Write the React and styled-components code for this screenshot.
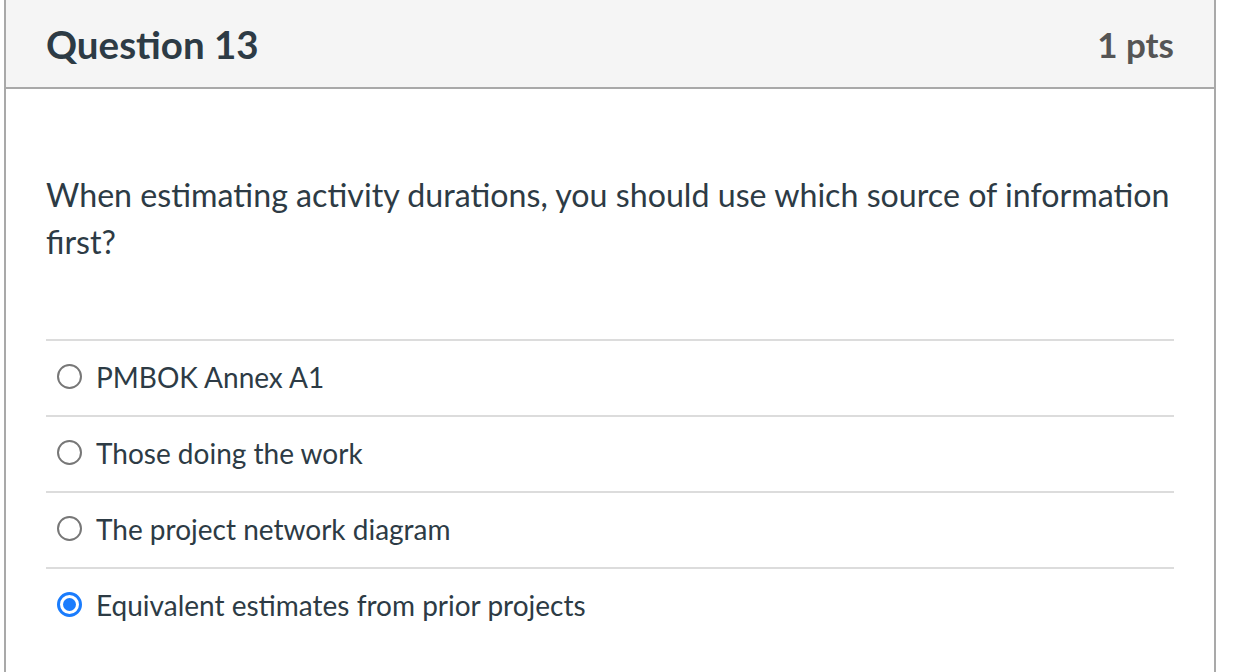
import React from 'react'
import styled, { createGlobalStyle } from 'styled-components'

const GlobalStyle = createGlobalStyle`
    html, body {
        margin: 0;
        padding: 0;
        background: #fff;
        font-family: Lato, "Liberation Sans", sans-serif;
        color: #2d3b45;
    }
`

const Page = styled.div`
    padding: 0 20px 0 4px;
    height: 672px;
    overflow: hidden;
`

const Card = styled.div`
    border-left: 2px solid #a9a9a9;
    border-right: 2px solid #a9a9a9;
    min-height: 720px;
`

const Header = styled.div`
    display: flex;
    justify-content: space-between;
    align-items: center;
    height: 87px;
    padding: 0 40px;
    background: #f5f5f5;
    border-bottom: 2px solid #a9a9a9;
`

const Title = styled.h2`
    margin: 0;
    font-size: 38.5px;
    font-weight: 700;
    color: #2d3b45;
`

const Points = styled.span`
    font-size: 35px;
    font-weight: 700;
    color: #555;
`

const Body = styled.div`
    padding: 82px 40px 0;
`

const QuestionText = styled.p`
    margin: 0 0 74px;
    font-size: 32.2px;
    line-height: 47px;
`

const Answer = styled.label`
    box-sizing: border-box;
    display: flex;
    align-items: center;
    gap: 14px;
    height: 76px;
    padding: 0 0 3px 11px;
    border-top: 2px solid #dcdcdc;
    font-size: 28px;
`

const Radio = styled.span`
    box-sizing: border-box;
    width: 25px;
    height: 25px;
    border-radius: 50%;
    flex: none;
    border: ${p => (p.checked ? '3px solid #1a7cfd' : '2px solid #777')};
    display: flex;
    align-items: center;
    justify-content: center;

    &::after {
        content: '';
        display: ${p => (p.checked ? 'block' : 'none')};
        width: 13px;
        height: 13px;
        border-radius: 50%;
        background: #1a7cfd;
    }
`

const answers = [
    'PMBOK Annex A1',
    'Those doing the work',
    'The project network diagram',
    'Equivalent estimates from prior projects',
]

const selected = 3

export default function App() {
    return (
        <Page>
            <GlobalStyle />
            <Card>
                <Header>
                    <Title>Question 13</Title>
                    <Points>1 pts</Points>
                </Header>
                <Body>
                    <QuestionText>
                        When estimating activity durations, you should use which source of information first?
                    </QuestionText>
                    {answers.map((a, i) => (
                        <Answer key={a}>
                            <Radio checked={i === selected} />
                            {a}
                        </Answer>
                    ))}
                </Body>
            </Card>
        </Page>
    )
}
